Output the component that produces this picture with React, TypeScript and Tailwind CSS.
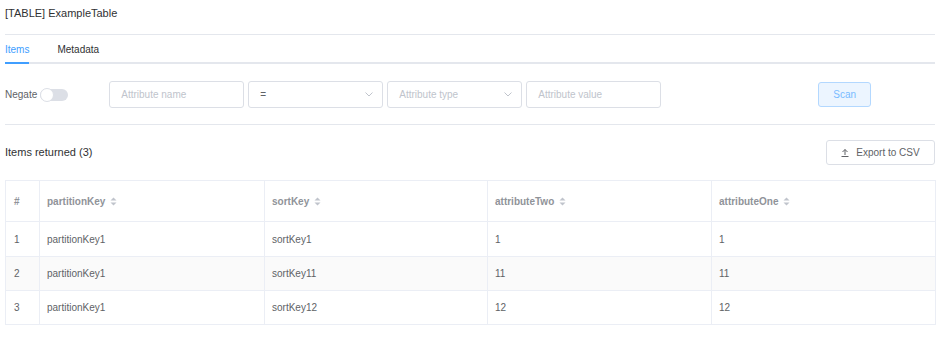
import React from "react";

const FONT = { fontFamily: '"Liberation Sans", Arial, sans-serif' };

type Row = { id: number; partitionKey: string; sortKey: string; attributeTwo: string; attributeOne: string };

const ROWS: Row[] = [
  { id: 1, partitionKey: "partitionKey1", sortKey: "sortKey1", attributeTwo: "1", attributeOne: "1" },
  { id: 2, partitionKey: "partitionKey1", sortKey: "sortKey11", attributeTwo: "11", attributeOne: "11" },
  { id: 3, partitionKey: "partitionKey1", sortKey: "sortKey12", attributeTwo: "12", attributeOne: "12" },
];

const COLUMNS = ["partitionKey", "sortKey", "attributeTwo", "attributeOne"];

function SortCaret() {
  return (
    <svg width="7" height="9" viewBox="0 0 7 9" className="ml-[5px] inline-block">
      <path d="M3.5 0.5 L6.5 3.5 L0.5 3.5 Z" fill="#c0c4cc" />
      <path d="M3.5 8.5 L6.5 5.5 L0.5 5.5 Z" fill="#c0c4cc" />
    </svg>
  );
}

function Chevron() {
  return (
    <svg width="8" height="5" viewBox="0 0 8 5" className="ml-auto">
      <path d="M0.5 0.5 L4 4 L7.5 0.5" fill="none" stroke="#c0c4cc" strokeWidth="1" />
    </svg>
  );
}

function TextInput({ placeholder }: { placeholder: string }) {
  return (
    <div className="flex h-[27px] w-[135px] items-center rounded-[3px] border border-[#dcdfe6] bg-white pl-[11px] text-[10px] text-[#c0c4cc]">
      {placeholder}
    </div>
  );
}

function SelectInput({ value, placeholder }: { value?: string; placeholder?: string }) {
  return (
    <div className="flex h-[27px] w-[135px] items-center rounded-[3px] border border-[#dcdfe6] bg-white pl-[11px] pr-[9px] text-[10px]">
      {value ? (
        <span className="text-[#606266]">{value}</span>
      ) : (
        <span className="text-[#c0c4cc]">{placeholder}</span>
      )}
      <Chevron />
    </div>
  );
}

export default function App() {
  return (
    <div className="min-h-[353px] w-[945px] bg-white pl-[5px] pr-[10px]" style={FONT}>
      {/* Title */}
      <div className="h-[34px] pt-[6px] text-[11px] leading-[14px] text-[#303133]">
        [TABLE] ExampleTable
      </div>
      <div className="h-px bg-[#e4e7ed]" />

      {/* Tabs */}
      <div className="flex h-[27px] items-center pt-[2px] text-[10px]">
        <span className="text-[#409eff]">Items</span>
        <span className="ml-[28px] text-[#303133]">Metadata</span>
      </div>
      <div className="relative h-[2px] bg-[#e4e7ed]">
        <div className="absolute left-0 top-0 h-[2px] w-[24px] bg-[#409eff]" />
      </div>

      {/* Filter row */}
      <div className="flex h-[61px] items-center border-b border-[#e4e7ed] pt-[1px]">
        <span className="text-[10px] text-[#606266]">Negate</span>
        <div className="relative ml-[3px] h-[12px] w-[28px] rounded-full bg-[#dcdfe6]">
          <div className="absolute left-0 top-[-1px] h-[14px] w-[14px] rounded-full border border-[#dcdfe6] bg-white" />
        </div>
        <div className="ml-[41px] flex gap-[4px]">
          <TextInput placeholder="Attribute name" />
          <SelectInput value="=" />
          <SelectInput placeholder="Attribute type" />
          <TextInput placeholder="Attribute value" />
        </div>
        <button className="ml-[157px] flex h-[25px] w-[53px] items-center justify-center rounded-[3px] border border-[#b3d8ff] bg-[#ecf5ff] text-[10px] text-[#79bbff]">
          Scan
        </button>
      </div>

      {/* Results header */}
      <div className="flex items-center justify-between pt-[15px]">
        <span className="text-[11px] text-[#303133]">Items returned (3)</span>
        <button className="flex h-[25px] w-[109px] items-center justify-center gap-[7px] rounded-[3px] border border-[#dcdfe6] bg-white text-[10px] text-[#606266]">
          <svg width="8" height="9" viewBox="0 0 8 9">
            <path d="M4 7 L4 1.5 M1.5 4 L4 1.5 L6.5 4" fill="none" stroke="#606266" strokeWidth="1" />
            <path d="M0.5 8.5 L7.5 8.5" stroke="#606266" strokeWidth="1" />
          </svg>
          Export to CSV
        </button>
      </div>

      {/* Table */}
      <table className="mt-[15px] w-[930px] table-fixed border-collapse text-[10px]">
        <colgroup>
          <col className="w-[34px]" />
          <col className="w-[225px]" />
          <col className="w-[223px]" />
          <col className="w-[224px]" />
          <col className="w-[224px]" />
        </colgroup>
        <thead>
          <tr className="h-[41px]">
            <th className="border border-[#ebeef5] pl-[8px] text-left font-bold text-[#909399]">#</th>
            {COLUMNS.map((c) => (
              <th key={c} className="border border-[#ebeef5] pl-[7px] text-left font-bold text-[#909399]">
                <span className="inline-flex items-center">
                  {c}
                  <SortCaret />
                </span>
              </th>
            ))}
          </tr>
        </thead>
        <tbody>
          {ROWS.map((r) => (
            <tr
              key={r.id}
              className={r.id === 2 ? "h-[34px] bg-[#fafafa]" : r.id === 1 ? "h-[35px]" : "h-[34px]"}
            >
              <td className="border border-[#ebeef5] pl-[8px] text-[#606266]">{r.id}</td>
              <td className="border border-[#ebeef5] pl-[7px] text-[#606266]">{r.partitionKey}</td>
              <td className="border border-[#ebeef5] pl-[7px] text-[#606266]">{r.sortKey}</td>
              <td className="border border-[#ebeef5] pl-[7px] text-[#606266]">{r.attributeTwo}</td>
              <td className="border border-[#ebeef5] pl-[7px] text-[#606266]">{r.attributeOne}</td>
            </tr>
          ))}
        </tbody>
      </table>
    </div>
  );
}
